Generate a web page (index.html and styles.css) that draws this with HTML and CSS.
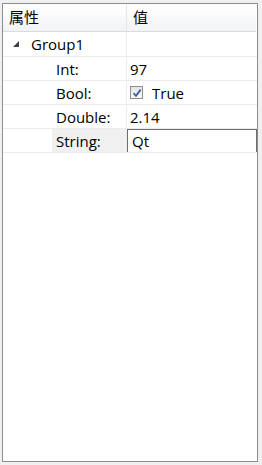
FILE: index.html
```html
<!DOCTYPE html>
<html lang="zh">
<head>
    <meta charset="UTF-8">
    <title>属性</title>
    <link rel="stylesheet" href="styles.css">
</head>
<body>
    <div class="browser">
        <div class="header">
            <div class="cell name">属性</div>
            <div class="cell">值</div>
        </div>

        <div class="row group">
            <div class="cell name">
                <svg class="arrow" width="7" height="7" viewBox="0 0 7 7">
                    <polygon points="6,0 6,6 0,6" fill="#404040"/>
                </svg>
                Group1
            </div>
            <div class="cell"></div>
        </div>

        <div class="row">
            <div class="cell name"><span class="label">Int:</span></div>
            <div class="cell value">97</div>
        </div>

        <div class="row">
            <div class="cell name"><span class="label">Bool:</span></div>
            <div class="cell value">
                <span class="check">
                    <svg width="10" height="10" viewBox="0 0 10 10">
                        <path d="M1.5 5.2 L4 7.8 L8.6 1.6" fill="none" stroke="#3a5fa8" stroke-width="1.8"/>
                    </svg>
                </span>
                True
            </div>
        </div>

        <div class="row">
            <div class="cell name"><span class="label">Double:</span></div>
            <div class="cell value">2.14</div>
        </div>

        <div class="row current">
            <div class="cell name"><span class="label">String:</span></div>
            <div class="cell value"><div class="editor">Qt</div></div>
        </div>
    </div>
</body>
</html>
```

FILE: styles.css
```css
body {
    margin: 0;
    background: #f0f0f0;
    font-family: "Open Sans", "Noto Sans CJK SC", sans-serif;
    font-size: 15px;
    color: #000;
}

.browser {
    margin: 3px 0 0 2px;
    width: 256px;
    height: 459px;
    box-sizing: border-box;
    border: 1px solid #8a8d93;
    background: #fff;
}

.header, .row {
    display: grid;
    grid-template-columns: 124px 1fr;
}

.header {
    height: 28px;
    box-sizing: border-box;
    border-bottom: 1px solid #d8dbe0;
    background: linear-gradient(#ffffff, #f2f3f5);
    margin-right: 1px;
}

.header .cell {
    padding-left: 6px;
    line-height: 27px;
}

.header .name {
    border-right: 1px solid #e3e5e8;
}

.row {
    height: 24px;
    box-sizing: border-box;
    border-bottom: 1px solid #ececec;
}

.row.group {
    height: 25px;
}

.cell {
    display: flex;
    align-items: center;
    overflow: hidden;
    white-space: nowrap;
}

.row .name {
    border-right: 1px solid #ececec;
}

.group .name {
    padding-left: 10px;
}

.arrow {
    margin-right: 11px;
}

.label {
    margin-left: 49px;
    padding-left: 4px;
    align-self: stretch;
    display: flex;
    align-items: center;
    flex: 1;
}

.current .label {
    background: #f0f0f0;
}

.value {
    padding-left: 3px;
}

.check {
    display: inline-flex;
    align-items: center;
    justify-content: center;
    width: 11px;
    height: 11px;
    margin-right: 9px;
    border: 1px solid #8e8f8f;
    background: linear-gradient(#e4e4e4, #fafafa);
}

.current .value {
    padding: 0;
    align-items: stretch;
}

.editor {
    flex: 1;
    display: flex;
    align-items: center;
    padding-left: 4px;
    border: 1px solid #6e6e6e;
    margin-bottom: -1px;
}
```
